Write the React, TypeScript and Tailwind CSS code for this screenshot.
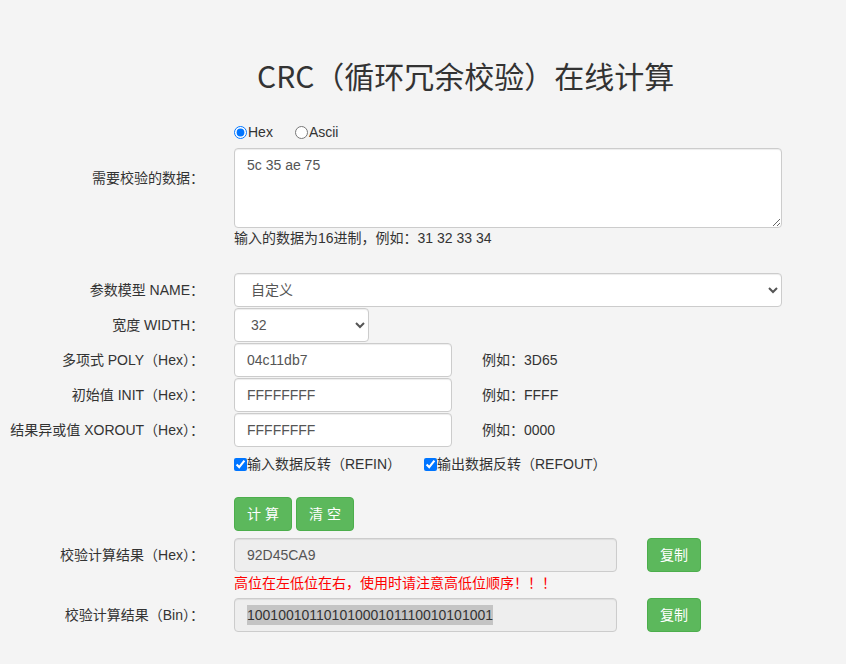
import { useState } from "react";

const labelCls = "w-[204px] shrink-0 text-right whitespace-nowrap";
const fieldCls =
  "h-[34px] border border-[#ccc] rounded-[4px] px-[12px] text-[14px] text-[#555] outline-none shadow-[inset_0_1px_1px_rgba(0,0,0,0.075)]";
const greenBtn =
  "h-[34px] rounded-[4px] border border-[#4cae4c] bg-[#5cb85c] text-white text-[14px]";

function Row({ label, children }: { label: string; children: React.ReactNode }) {
  return (
    <div className="flex items-center">
      <div className={labelCls}>{label}</div>
      <div className="ml-[30px] flex items-center">{children}</div>
    </div>
  );
}

export default function App() {
  const [mode, setMode] = useState("hex");
  return (
    <div
      className="min-h-screen bg-[#f4f4f4] text-[14px] leading-[20px] text-[#333]"
      style={{ fontFamily: '"Liberation Sans", "Noto Sans CJK SC", sans-serif' }}
    >
      <div className="pt-[53px]">
        <h1
          className="pl-[257px] h-[44px] text-[30px] leading-[44px] font-normal text-[#333]"
          style={{ fontFamily: '"Noto Sans CJK SC", sans-serif' }}
        >
          CRC（循环冗余校验）在线计算
        </h1>

        <div className="mt-[25px] ml-[234px] flex items-center h-[20px]">
          <label className="flex items-center">
            <input
              type="radio"
              name="mode"
              checked={mode === "hex"}
              onChange={() => setMode("hex")}
              className="w-[13px] h-[13px]"
            />
            <span className="ml-[1px]">Hex</span>
          </label>
          <label className="flex items-center ml-[22px]">
            <input
              type="radio"
              name="mode"
              checked={mode === "ascii"}
              onChange={() => setMode("ascii")}
              className="w-[13px] h-[13px]"
            />
            <span className="ml-[1px]">Ascii</span>
          </label>
        </div>

        <div className="mt-[6px] flex items-start">
          <div className={`${labelCls} mt-[20px]`}>需要校验的数据：</div>
          <textarea
            defaultValue="5c 35 ae 75"
            className="ml-[30px] w-[548px] h-[80px] border border-[#ccc] rounded-[4px] bg-white px-[12px] py-[6px] text-[14px] leading-[20px] text-[#555] outline-none resize-y shadow-[inset_0_1px_1px_rgba(0,0,0,0.075)]"
          />
        </div>
        <div className="ml-[234px] h-[20px]">输入的数据为16进制，例如：31 32 33 34</div>

        <div className="mt-[25px] flex flex-col gap-[1px]">
          <Row label="参数模型 NAME：">
            <select className={`${fieldCls} bg-white w-[548px]`} defaultValue="custom">
              <option value="custom">自定义</option>
              <option value="crc32">CRC-32</option>
            </select>
          </Row>
          <Row label="宽度 WIDTH：">
            <select className={`${fieldCls} bg-white w-[135px]`} defaultValue="32">
              <option value="8">8</option>
              <option value="16">16</option>
              <option value="32">32</option>
            </select>
          </Row>
          <Row label="多项式 POLY（Hex）：">
            <input className={`${fieldCls} bg-white w-[218px]`} defaultValue="04c11db7" />
            <span className="ml-[30px]">例如：3D65</span>
          </Row>
          <Row label="初始值 INIT（Hex）：">
            <input className={`${fieldCls} bg-white w-[218px]`} defaultValue="FFFFFFFF" />
            <span className="ml-[30px]">例如：FFFF</span>
          </Row>
          <Row label="结果异或值 XOROUT（Hex）：">
            <input className={`${fieldCls} bg-white w-[218px]`} defaultValue="FFFFFFFF" />
            <span className="ml-[30px]">例如：0000</span>
          </Row>
        </div>

        <div className="mt-[7px] ml-[234px] flex items-center h-[20px]">
          <label className="flex items-center w-[190px]">
            <input type="checkbox" defaultChecked className="w-[13px] h-[13px]" />
            <span>输入数据反转（REFIN）</span>
          </label>
          <label className="flex items-center">
            <input type="checkbox" defaultChecked className="w-[13px] h-[13px]" />
            <span>输出数据反转（REFOUT）</span>
          </label>
        </div>

        <div className="mt-[23px] ml-[234px] flex gap-[4px]">
          <button className={`${greenBtn} w-[58px] tracking-[4px] pl-[4px]`}>计算</button>
          <button className={`${greenBtn} w-[58px] tracking-[4px] pl-[4px]`}>清空</button>
        </div>

        <div className="mt-[7px]">
          <Row label="校验计算结果（Hex）：">
            <input readOnly className={`${fieldCls} bg-[#eee] w-[383px]`} defaultValue="92D45CA9" />
            <button className={`${greenBtn} ml-[30px] w-[54px]`}>复制</button>
          </Row>
        </div>
        <div className="mt-[1px] ml-[234px] h-[20px] text-[#f00]">
          高位在左低位在右，使用时请注意高低位顺序！！！
        </div>

        <div className="mt-[5px]">
          <Row label="校验计算结果（Bin）：">
            <div className={`${fieldCls} bg-[#eee] w-[383px] flex items-center`}>
              <span className="bg-[#c4c4c4] text-[#333]">10010010110101000101110010101001</span>
            </div>
            <button className={`${greenBtn} ml-[30px] w-[54px]`}>复制</button>
          </Row>
        </div>
      </div>
    </div>
  );
}
